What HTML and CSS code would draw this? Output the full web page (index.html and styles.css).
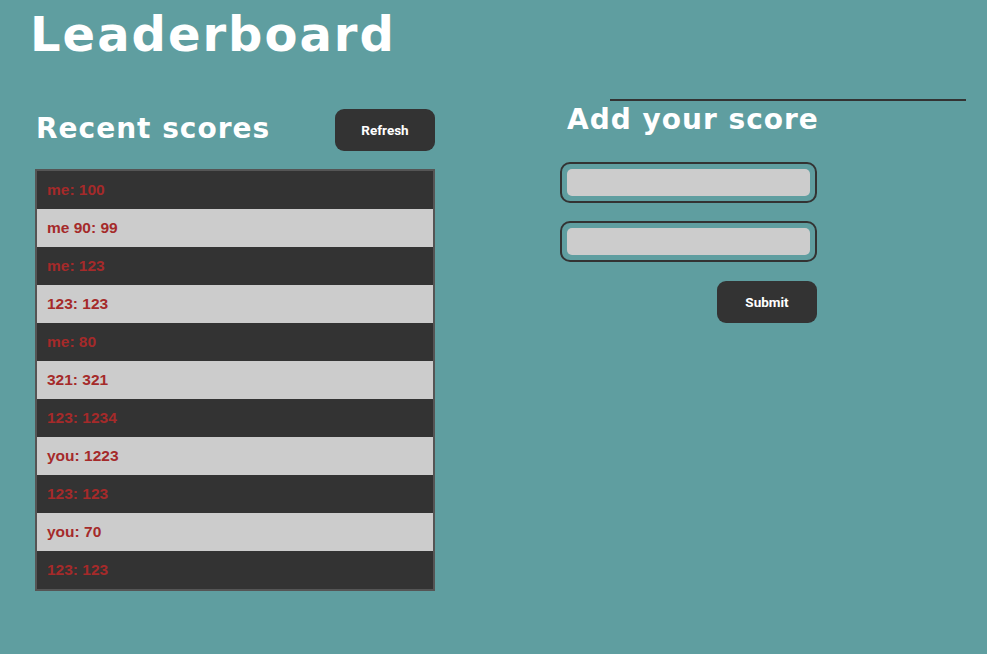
FILE: index.html
```html
<!DOCTYPE html>
<html>
<head>
<meta charset="utf-8">
<link rel="stylesheet" href="styles.css">
</head>
<body>
<h1 class="title">Leaderboard</h1>
<div class="main">
  <section class="recent">
    <div class="recent-head">
      <h2 class="heading">Recent scores</h2>
      <button class="btn">Refresh</button>
    </div>
    <ul class="scores">
      <li class="row dark">me: 100</li>
      <li class="row light">me 90: 99</li>
      <li class="row dark">me: 123</li>
      <li class="row light">123: 123</li>
      <li class="row dark">me: 80</li>
      <li class="row light">321: 321</li>
      <li class="row dark">123: 1234</li>
      <li class="row light">you: 1223</li>
      <li class="row dark">123: 123</li>
      <li class="row light">you: 70</li>
      <li class="row dark">123: 123</li>
    </ul>
  </section>
  <section class="add">
    <div class="rule"></div>
    <h2 class="heading add-heading">Add your score</h2>
    <div class="field"><input class="input" type="text"></div>
    <div class="field"><input class="input" type="text"></div>
    <div class="submit-row"><button class="btn">Submit</button></div>
  </section>
</div>
</body>
</html>
```

FILE: styles.css
```css
html, body {
  margin: 0;
  padding: 0;
  background: #5f9ea0;
}
body {
  width: 987px;
  height: 654px;
  overflow: hidden;
}
.title {
  margin: 0;
  padding: 4px 0 0 30px;
  font-family: "DejaVu Sans", Verdana, sans-serif;
  font-weight: bold;
  font-size: 48px;
  letter-spacing: 2px;
  line-height: 60px;
  color: #fff;
}
.main {
  display: flex;
  padding-left: 35px;
}
.recent {
  width: 400px;
}
.recent-head {
  display: flex;
  justify-content: space-between;
  align-items: center;
  margin-top: 45px;
  height: 42px;
}
.heading {
  margin: 0;
  font-family: "DejaVu Sans", Verdana, sans-serif;
  font-weight: bold;
  font-size: 28px;
  letter-spacing: 1px;
  color: #fff;
  line-height: 34px;
}
.recent-head .heading {
  padding-left: 1px;
  margin-top: -3px;
}
.btn {
  width: 100px;
  height: 42px;
  border: none;
  border-radius: 9px;
  background: #333;
  color: #fff;
  font-family: Roboto, "Liberation Sans", sans-serif;
  font-weight: bold;
  font-size: 13.5px;
  padding: 0;
}
.scores {
  list-style: none;
  margin: 18px 0 0 0;
  padding: 0;
  border: 2px solid #555;
  width: 396px;
}
.row {
  height: 38px;
  line-height: 38px;
  padding-left: 10px;
  font-family: "Liberation Sans", Arial, sans-serif;
  font-weight: bold;
  font-size: 15.5px;
  color: #a52a2a;
}
.dark { background: #333; }
.light { background: #ccc; }
.add {
  margin-left: 125px;
  width: 407px;
}
.rule {
  margin: 35px 0 0 50px;
  height: 2px;
  background: #333;
  width: 356px;
}
.add-heading {
  margin: 2px 0 0 7px;
}
.field {
  width: 243px;
  height: 27px;
  padding: 5px;
  border: 2px solid #333;
  border-radius: 10px;
}
.add-heading + .field {
  margin-top: 25px;
}
.field + .field {
  margin-top: 18px;
}
.input {
  display: block;
  width: 100%;
  height: 100%;
  box-sizing: border-box;
  border: none;
  border-radius: 5px;
  background: #ccc;
  padding: 0 6px;
  margin: 0;
}
.submit-row {
  width: 257px;
  display: flex;
  justify-content: flex-end;
  margin-top: 19px;
}
```
